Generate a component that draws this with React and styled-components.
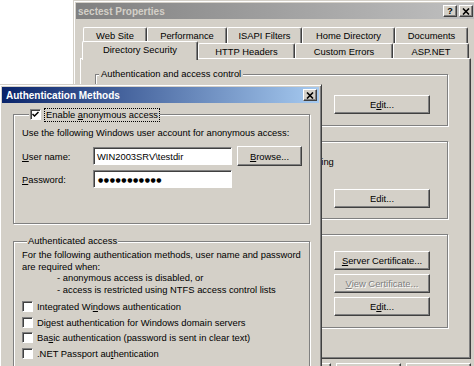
import React from 'react'
import styled, { createGlobalStyle, css } from 'styled-components'

const GlobalStyle = createGlobalStyle`
  html, body { margin: 0; padding: 0; background: #fff; }
  body {
    font-family: "Liberation Sans", Arial, sans-serif;
    font-size: 9.4px;
    color: #000;
    overflow: hidden;
  }
`

const FACE = '#d4d0c8'
const raised = css`
  border: 1px solid;
  border-color: #fff #404040 #404040 #fff;
  box-shadow: inset -1px -1px #808080;
`

const Desktop = styled.div`
  position: relative;
  width: 474px;
  height: 366px;
  overflow: hidden;
  background: #fff;
`

// windows sit on the desktop at their own place
const Window = styled.div`
  position: absolute;
  left: ${p => p.$left}px;
  top: ${p => p.$top}px;
  width: ${p => p.$width}px;
  height: ${p => p.$height}px;
  box-sizing: border-box;
  background: ${FACE};
  border: 1px solid;
  border-color: ${FACE} #404040 #404040 ${FACE};
  box-shadow: inset 1px 1px #fff, inset -1px -1px #808080;
  padding: 2px;
  display: flex;
  flex-direction: column;
`

const Caption = styled.div`
  flex: none;
  height: 16px;
  display: flex;
  align-items: center;
  padding: 0 2px 0 ${p => p.$inset}px;
  background: ${p => p.$active
    ? 'linear-gradient(to right, #0a246a, #a6caf0)'
    : 'linear-gradient(to right, #808080, #c0c0c0)'};
`

const CaptionText = styled.span`
  flex: 1;
  font-weight: bold;
  font-size: 10px;
  white-space: nowrap;
  color: ${p => (p.$active ? '#fff' : FACE)};
`

const CaptionButton = styled.div`
  box-sizing: border-box;
  width: 14px;
  height: 12px;
  margin-left: 2px;
  background: ${FACE};
  ${raised};
  display: flex;
  align-items: center;
  justify-content: center;
  font-weight: bold;
  font-size: 9px;
  line-height: 1;
`

const Body = styled.div`
  display: flex;
  flex-direction: column;
  padding: ${p => p.$pad};
`

const TabRow = styled.div`
  display: flex;
  flex: none;
  height: ${p => p.$h}px;
  margin-left: ${p => p.$indent}px;
`

const Tab = styled.div`
  box-sizing: border-box;
  width: ${p => p.$w}px;
  background: ${FACE};
  border-top: 1px solid #fff;
  border-left: 1px solid #fff;
  border-right: 1px solid #404040;
  box-shadow: inset -1px 0 #808080;
  border-radius: 2px 2px 0 0;
  display: flex;
  align-items: center;
  justify-content: center;
  white-space: nowrap;
  ${p => p.$selected && css`
    position: relative;
    z-index: 1;
    margin-top: -2px;
    height: calc(100% + 4px);
    padding-bottom: 3px;
  `}
`

const TabPanel = styled.div`
  box-sizing: border-box;
  width: 391px;
  height: 301px;
  ${raised};
  padding: 9px 0 0 14px;
  display: flex;
  flex-direction: column;
`

const Group = styled.fieldset`
  box-sizing: border-box;
  min-width: 0;
  width: ${p => p.$w}px;
  margin: 0 0 ${p => p.$after || 0}px;
  padding: ${p => p.$pad};
  border: 1px solid #808080;
  box-shadow: inset 1px 1px #fff, 1px 1px #fff;
`

const Legend = styled.legend`
  padding: 0 ${p => p.$pad ?? 2}px;
  margin-left: ${p => p.$indent}px;
  line-height: 12px;
  background: ${FACE};
`

const GroupRow = styled.div`
  display: flex;
  justify-content: space-between;
  align-items: flex-start;
`

const Blurb = styled.p`
  margin: ${p => p.$top}px 0 0 57px;
  line-height: 12px;
  white-space: nowrap;
`

const ButtonStack = styled.div`
  display: flex;
  flex-direction: column;
  gap: 4px;
  margin-top: ${p => p.$top}px;
`

const Button = styled.button`
  box-sizing: border-box;
  width: ${p => p.$w}px;
  height: ${p => p.$h || 19}px;
  padding: 0;
  background: ${FACE};
  ${raised};
  font: 9.4px "Liberation Sans", Arial, sans-serif;
  color: #000;
  &:disabled {
    color: #808080;
    text-shadow: 1px 1px #fff;
  }
`

const DialogButtons = styled.div`
  display: flex;
  justify-content: flex-end;
  gap: 5px;
  width: 391px;
  margin-top: 4px;
`

const Line = styled.div`
  line-height: ${p => p.$lh || 12}px;
  white-space: nowrap;
  padding-left: ${p => p.$indent || 0}px;
`

const FieldGrid = styled.div`
  display: grid;
  grid-template-columns: 71px 144px 65px;
  row-gap: 4px;
  align-items: center;
  margin-top: 7px;
`

const TextBox = styled.div`
  box-sizing: border-box;
  width: 139px;
  height: 18px;
  background: #fff;
  border: 1px solid;
  border-color: #808080 #fff #fff #808080;
  box-shadow: inset 1px 1px #404040;
  padding: 0 3px;
  display: flex;
  align-items: center;
  white-space: nowrap;
`

const Dots = styled.span`
  font-family: "DejaVu Sans", sans-serif;
  font-size: 6px;
  letter-spacing: 0.6px;
  padding-left: 1px;
`

const Check = styled.span`
  box-sizing: border-box;
  flex: none;
  width: 11px;
  height: 11px;
  background: #fff;
  border: 1px solid;
  border-color: #808080 #fff #fff #808080;
  box-shadow: inset 1px 1px #404040;
  display: flex;
  align-items: center;
  justify-content: center;
`

const CheckLabel = styled.label`
  display: flex;
  align-items: center;
  gap: 4px;
  height: ${p => p.$h || 15.5}px;
  white-space: nowrap;
`

const Focus = styled.span`
  outline: 1px dotted #000;
  outline-offset: 0;
  padding: 0 1px;
  line-height: 12px;
`

const CheckList = styled.div`
  display: flex;
  flex-direction: column;
  margin-top: 4px;
`

const CloseGlyph = () => (
  <svg width="8" height="7" viewBox="0 0 8 7">
    <path d="M1 0.5 L7 6.5 M7 0.5 L1 6.5" stroke="#000" strokeWidth="1.6" />
  </svg>
)

const Box = ({ checked }) => (
  <Check>
    {checked && (
      <svg width="7" height="7" viewBox="0 0 7 7">
        <path d="M0.5 3 L2.5 5 L6.5 1" stroke="#000" strokeWidth="1.5" fill="none" />
      </svg>
    )}
  </Check>
)

const rowOne = [
  ['Web Site', 64], ['Performance', 80], ['ISAPI Filters', 75],
  ['Home Directory', 93], ['Documents', 73],
]
const rowTwo = [
  ['Directory Security', 116, true], ['HTTP Headers', 97],
  ['Custom Errors', 98], ['ASP.NET', 76],
]

const authMethods = [
  [<>Integrated Wi<u>n</u>dows authentication</>],
  [<>Di<u>g</u>est authentication for Windows domain servers</>],
  [<>Ba<u>s</u>ic authentication (password is sent in clear text)</>],
  [<>.NET Passport au<u>t</u>hentication</>],
]

const App = () => (
  <Desktop>
    <GlobalStyle />

    <Window $left={73} $top={0} $width={405} $height={400}>
      <Caption $inset={2}>
        <CaptionText>sectest Properties</CaptionText>
        <CaptionButton>?</CaptionButton>
        <CaptionButton><CloseGlyph /></CaptionButton>
      </Caption>
      <Body $pad="8px 0 0 4px">
        <TabRow $h={16} $indent={3}>
          {rowOne.map(([label, w]) => <Tab key={label} $w={w}>{label}</Tab>)}
        </TabRow>
        <TabRow $h={15} $indent={2}>
          {rowTwo.map(([label, w, sel]) => (
            <Tab key={label} $w={w} $selected={sel}>{label}</Tab>
          ))}
        </TabRow>
        <TabPanel>
          <Group $w={353} $pad="0 17px 11px 0" $after={9}>
            <Legend $indent={3}>Authentication and access control</Legend>
            <GroupRow>
              <Blurb $top={2}>
                Enable anonymous access and edit the<br />
                authentication methods for this resource.
              </Blurb>
              <ButtonStack $top={15}>
                <Button $w={96}>E<u>d</u>it...</Button>
              </ButtonStack>
            </GroupRow>
          </Group>
          <Group $w={353} $pad="0 17px 10px 0" $after={9}>
            <Legend $indent={3}>IP address and domain name restrictions</Legend>
            <GroupRow>
              <Blurb $top={9}>
                Grant or deny access to this resource using<br />
                IP addresses or Internet domain names.
              </Blurb>
              <ButtonStack $top={42}>
                <Button $w={96}>Edit...</Button>
              </ButtonStack>
            </GroupRow>
          </Group>
          <Group $w={353} $pad="0 17px 11px 0">
            <Legend $indent={3}>Secure communications</Legend>
            <GroupRow>
              <Blurb $top={12}>
                Require secure communications and<br />
                enable client certificates when this<br />
                resource is accessed.
              </Blurb>
              <ButtonStack $top={11}>
                <Button $w={96}><u>S</u>erver Certificate...</Button>
                <Button $w={96} disabled><u>V</u>iew Certificate...</Button>
                <Button $w={96}>E<u>d</u>it...</Button>
              </ButtonStack>
            </GroupRow>
          </Group>
        </TabPanel>
        <DialogButtons>
          <Button $w={65}>OK</Button>
          <Button $w={65}>Cancel</Button>
          <Button $w={65}>Apply</Button>
          <Button $w={65}>Help</Button>
        </DialogButtons>
      </Body>
    </Window>

    <Window $left={-1} $top={84} $width={323} $height={300}>
      <Caption $active $inset={4}>
        <CaptionText $active>Authentication Methods</CaptionText>
        <CaptionButton><CloseGlyph /></CaptionButton>
      </Caption>
      <Body $pad="5px 10px 0 11px">
        <Group $w={297} $pad="6px 0 35px 8px" $after={11}>
          <Legend $indent={7} $pad={1}>
            <CheckLabel $h={13}>
              <Box checked />
              <Focus>Enable <u>a</u>nonymous access</Focus>
            </CheckLabel>
          </Legend>
          <Line>Use the following Windows user account for anonymous access:</Line>
          <FieldGrid>
            <span><u>U</u>ser name:</span>
            <TextBox>WIN2003SRV\testdir</TextBox>
            <Button $w={65} $h={20}><u>B</u>rowse...</Button>
            <span><u>P</u>assword:</span>
            <TextBox><Dots>●●●●●●●●●●●</Dots></TextBox>
            <span />
          </FieldGrid>
        </Group>
        <Group $w={297} $pad="2px 0 20px 8px">
          <Legend $indent={5} $pad={1}>Authenticated access</Legend>
          <Line $lh={11.5}>For the following authentication methods, user name and password</Line>
          <Line $lh={11.5}>are required when:</Line>
          <Line $lh={11.5} $indent={35}>- anonymous access is disabled, or</Line>
          <Line $lh={11.5} $indent={35}>- access is restricted using NTFS access control lists</Line>
          <CheckList>
            {authMethods.map(([label], i) => (
              <CheckLabel key={i}>
                <Box />
                <span>{label}</span>
              </CheckLabel>
            ))}
          </CheckList>
        </Group>
      </Body>
    </Window>
  </Desktop>
)

export default App
